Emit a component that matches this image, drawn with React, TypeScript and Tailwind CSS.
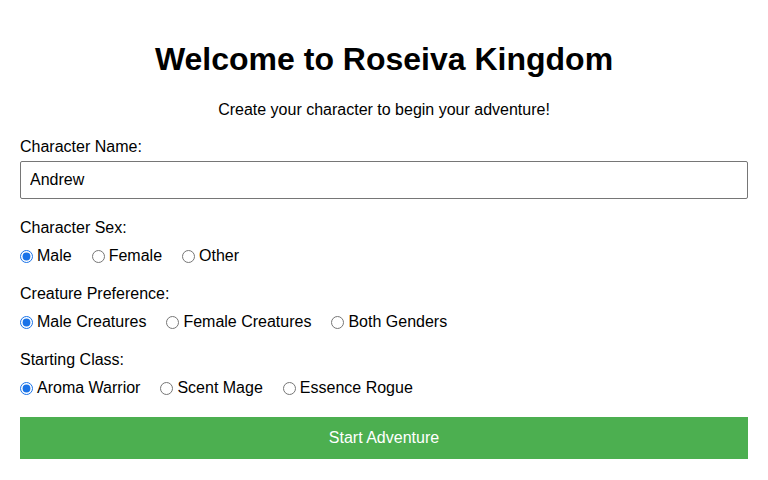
import React, { useState } from "react";

function RadioGroup({
  label,
  name,
  options,
}: {
  label: string;
  name: string;
  options: string[];
}) {
  const [value, setValue] = useState(options[0]);
  return (
    <div className="mb-[20px]">
      <div className="block leading-[18px] mb-[10px]">{label}</div>
      <div className="flex items-center gap-[20px] h-[18px]">
        {options.map((o) => (
          <label key={o} className="flex items-center gap-[4px] leading-[18px]">
            <input
              type="radio"
              name={name}
              checked={value === o}
              onChange={() => setValue(o)}
              className="w-[13px] h-[13px] m-0 accent-[#1a73e8]"
            />
            <span>{o}</span>
          </label>
        ))}
      </div>
    </div>
  );
}

export default function App() {
  const [name, setName] = useState("Andrew");
  return (
    <div
      className="min-h-[480px] bg-white text-black p-[20px]"
      style={{ fontFamily: '"Liberation Sans", Arial, sans-serif' }}
    >
      <h1 className="text-[32px] font-bold text-center leading-[37px] mt-[21px] mb-[23px]">
        Welcome to Roseiva Kingdom
      </h1>
      <p className="text-center text-[16px] leading-[18px] mb-[19px]">
        Create your character to begin your adventure!
      </p>
      <div className="mb-[20px]">
        <div className="leading-[18px] mb-[5px]">Character Name:</div>
        <input
          type="text"
          value={name}
          onChange={(e) => setName(e.target.value)}
          className="w-full h-[38px] border border-[#767676] rounded-[2px] px-[9px] text-[16px] outline-none"
        />
      </div>
      <RadioGroup label="Character Sex:" name="sex" options={["Male", "Female", "Other"]} />
      <RadioGroup
        label="Creature Preference:"
        name="pref"
        options={["Male Creatures", "Female Creatures", "Both Genders"]}
      />
      <RadioGroup
        label="Starting Class:"
        name="cls"
        options={["Aroma Warrior", "Scent Mage", "Essence Rogue"]}
      />
      <button className="w-full h-[42px] bg-[#4CAF50] text-white text-[16px] leading-[18px]">
        Start Adventure
      </button>
    </div>
  );
}
